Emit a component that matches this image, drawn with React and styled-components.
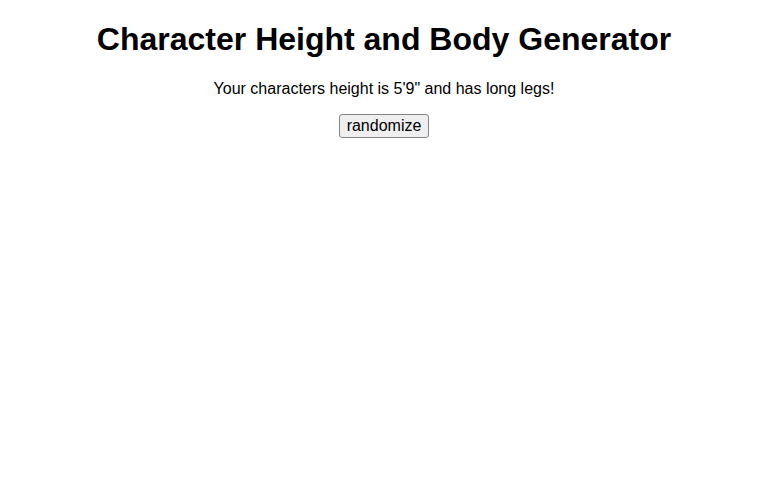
import React, { useState } from "react";
import styled, { createGlobalStyle } from "styled-components";

const GlobalStyle = createGlobalStyle`
  body {
    margin: 0 8px;
    background: #ffffff;
    font-family: "Liberation Sans", Arial, sans-serif;
    color: #000000;
  }
`;

const Page = styled.main`
  text-align: center;
`;

const Title = styled.h1`
  font-size: 32px;
  font-weight: bold;
  margin: 21.44px 0;
`;

const Result = styled.p`
  font-size: 16px;
  margin: 16px 0;
`;

const Controls = styled.div`
  display: flex;
  justify-content: center;
`;

const RandomButton = styled.button`
  font-family: "Liberation Sans", Arial, sans-serif;
  font-size: 16px;
  color: #000000;
  background: #efefef;
  border: 1px solid #858585;
  border-radius: 3px;
  padding: 2px 7px;
  height: 24px;
  line-height: 18px;
  cursor: pointer;
  &:hover {
    background: #e5e5e5;
  }
`;

const heights = ["5'2\"", "5'4\"", "5'6\"", "5'9\"", "5'11\"", "6'1\"", "6'3\""];
const bodies = ["long legs", "a short torso", "broad shoulders", "a slim build", "long arms"];

export default function App() {
  const [height, setHeight] = useState("5'9\"");
  const [body, setBody] = useState("long legs");

  const randomize = () => {
    setHeight(heights[Math.floor(Math.random() * heights.length)]);
    setBody(bodies[Math.floor(Math.random() * bodies.length)]);
  };

  return (
    <>
      <GlobalStyle />
      <Page>
        <Title>Character Height and Body Generator</Title>
        <Result>
          Your characters height is {height} and has {body}!
        </Result>
        <Controls>
          <RandomButton onClick={randomize}>randomize</RandomButton>
        </Controls>
      </Page>
    </>
  );
}
